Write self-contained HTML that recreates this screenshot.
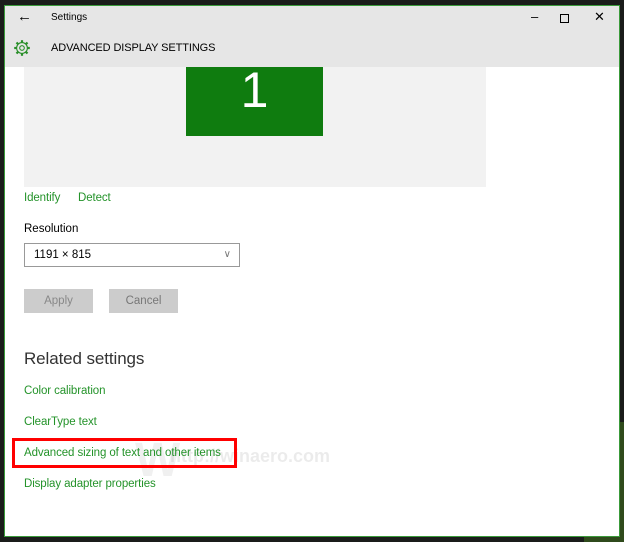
<!DOCTYPE html>
<html><head><meta charset="utf-8"><style>
body{margin:0;width:624px;height:542px;background:#1a1c1a;position:relative;overflow:hidden;font-family:"Liberation Sans",sans-serif}
.win{position:absolute;left:4px;top:5px;width:614px;height:530px;background:#fff;border:1px solid #3a9a3a}
.tb{position:absolute;left:0;top:0;width:614px;height:61px;background:#e6e6e6}
.a{position:absolute;font-size:11.5px;color:#24932a;letter-spacing:-0.1px}
.t{position:absolute;color:#000}
</style></head><body>
<div style="position:absolute;right:0;bottom:0;width:40px;height:120px;background:#2f4a1c"></div>
<div class="win">
<div class="tb">
<div class="t" style="left:12px;top:2px;font-size:15px">&#8592;</div>
<div class="t" style="left:46px;top:6px;font-size:10px">Settings</div>
<div class="t" style="left:526px;top:3px;font-size:13px">&#8211;</div>
<div style="position:absolute;left:555px;top:8px;width:7px;height:7px;border:1px solid #000"></div>
<div class="t" style="left:589px;top:3px;font-size:13px">&#10005;</div>
<svg style="position:absolute;left:8px;top:33px" width="18" height="18" viewBox="0 0 18 18"><g fill="#2a8f2a">
<rect x="7.9" y="1.2" width="2.2" height="2.6"/>
<rect x="7.9" y="1.2" width="2.2" height="2.6" transform="rotate(45 9 9)"/>
<rect x="7.9" y="1.2" width="2.2" height="2.6" transform="rotate(90 9 9)"/>
<rect x="7.9" y="1.2" width="2.2" height="2.6" transform="rotate(135 9 9)"/>
<rect x="7.9" y="1.2" width="2.2" height="2.6" transform="rotate(180 9 9)"/>
<rect x="7.9" y="1.2" width="2.2" height="2.6" transform="rotate(225 9 9)"/>
<rect x="7.9" y="1.2" width="2.2" height="2.6" transform="rotate(270 9 9)"/>
<rect x="7.9" y="1.2" width="2.2" height="2.6" transform="rotate(315 9 9)"/></g>
<circle cx="9" cy="9" r="5.4" fill="#e6e6e6" stroke="#2a8f2a" stroke-width="1.1"/><circle cx="9" cy="9" r="2.3" fill="none" stroke="#2a8f2a" stroke-width="1.1"/></svg>
<div class="t" style="left:46px;top:36px;font-size:11px;letter-spacing:-0.1px">ADVANCED DISPLAY SETTINGS</div>
</div>
<div style="position:absolute;left:19px;top:61px;width:462px;height:120px;background:#f2f2f2"></div>
<div style="position:absolute;left:181px;top:61px;width:137px;height:69px;background:#0f7c0f;color:#fff;font-size:50px;text-align:center;line-height:46px;font-weight:300">1</div>
<div class="a" style="left:19px;top:186px">Identify</div>
<div class="a" style="left:73px;top:186px">Detect</div>
<div class="t" style="left:19px;top:217px;font-size:11.5px">Resolution</div>
<div style="position:absolute;left:19px;top:237px;height:22px;border:1px solid #999;background:#fff;font-size:11.5px;line-height:22px;padding-left:9px;width:205px">1191 × 815<span style="position:absolute;right:8px;top:0;color:#777;font-size:10px">&#8744;</span></div>
<div style="position:absolute;left:19px;top:283px;width:69px;height:24px;background:#ccc;color:#888;font-size:11.5px;text-align:center;line-height:24px">Apply</div>
<div style="position:absolute;left:104px;top:283px;width:69px;height:24px;background:#ccc;color:#777;font-size:11.5px;text-align:center;line-height:24px">Cancel</div>
<div class="t" style="left:19px;top:343px;font-size:17px;color:#333;letter-spacing:-0.1px">Related settings</div>
<div class="a" style="left:19px;top:379px">Color calibration</div>
<div class="a" style="left:19px;top:410px">ClearType text</div>
<div style="position:absolute;left:130px;top:427px;font-size:48px;font-weight:bold;color:rgba(0,0,0,.06)">W</div>
<div style="position:absolute;left:165px;top:440px;font-size:18px;font-weight:bold;color:rgba(0,0,0,.08)">http://winaero.com</div>
<div style="position:absolute;left:7px;top:432px;width:219px;height:24px;border:3px solid #f00"></div>
<div class="a" style="left:19px;top:441px">Advanced sizing of text and other items</div>
<div class="a" style="left:19px;top:472px">Display adapter properties</div>
</div>
</body></html>
